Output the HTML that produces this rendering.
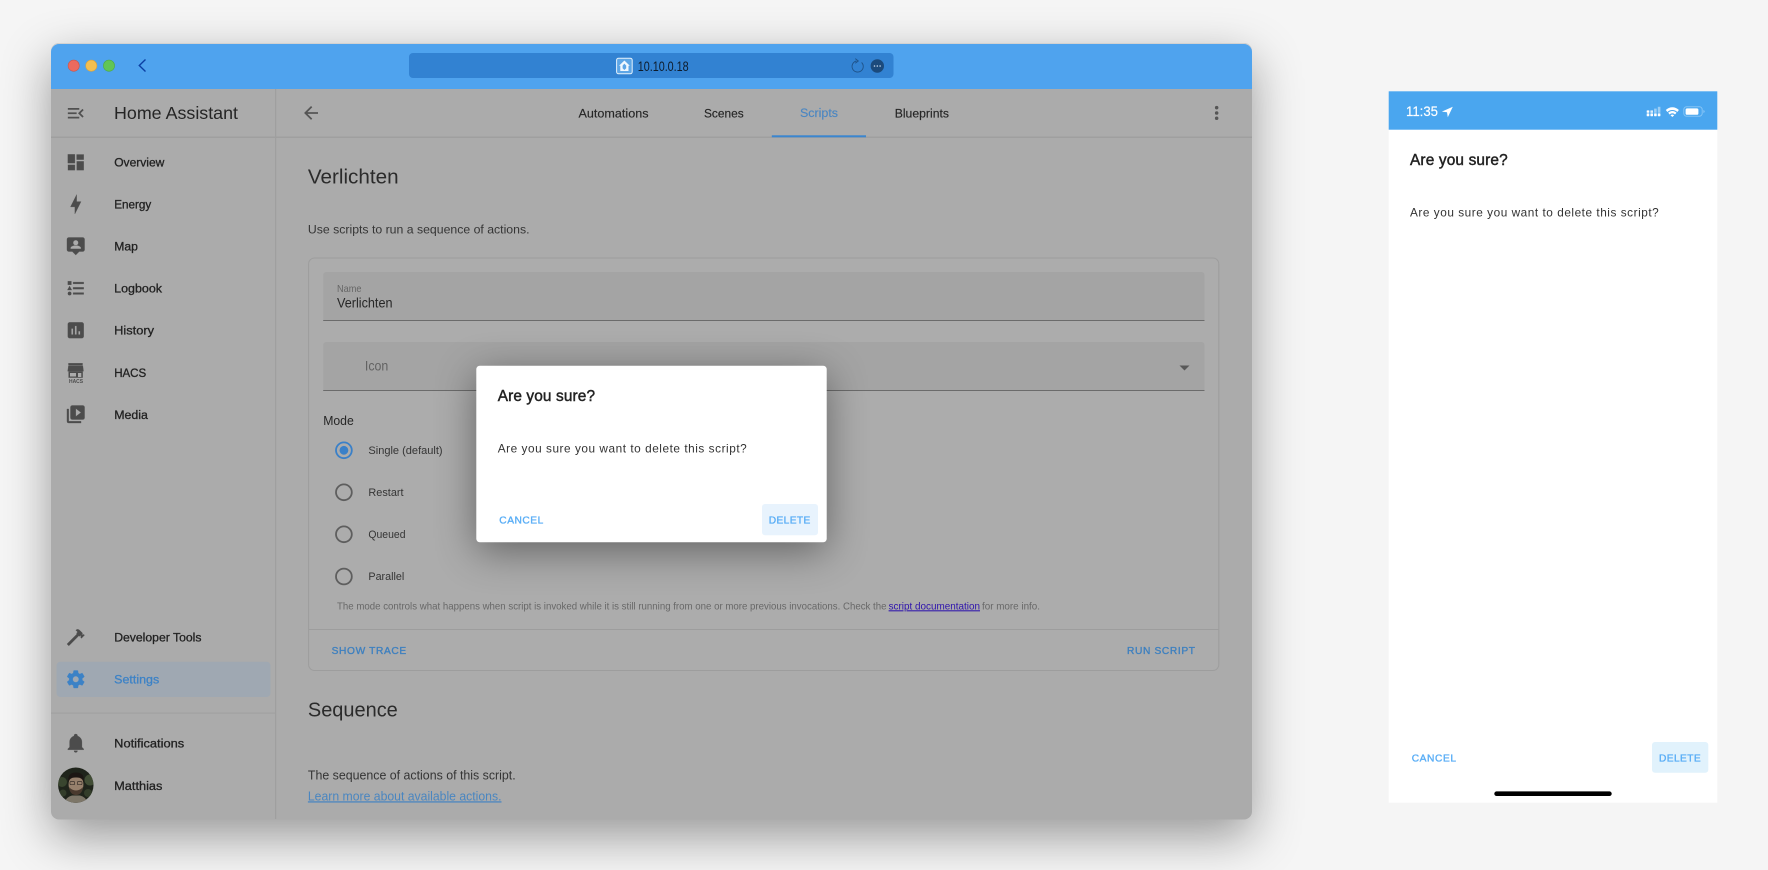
<!DOCTYPE html>
<html lang="en">
<head>
<meta charset="utf-8">
<title>Home Assistant</title>
<style>
html,body{margin:0;padding:0;width:1768px;height:870px;overflow:hidden;background:#f5f5f5}
svg{display:block;position:absolute;left:0;top:0;filter:blur(.35px)}
text{font-family:"Liberation Sans",sans-serif;font-size:12.4px;white-space:pre}
.n{fill:#222;stroke:#222;stroke-width:.3px}
.s{fill:#353535}
.h{fill:#2b2b2b;font-size:20.6px}
.b{font-size:10.2px;stroke-width:.35px}
.i{fill:#5a5a5a}
.g{fill:#686868;font-size:10.3px}
</style>
</head>
<body>
<svg width="1768" height="870" viewBox="0 0 1768 870" xmlns="http://www.w3.org/2000/svg">
<!-- browser window -->
<rect x="51" y="43" width="1201" height="776.5" rx="8" fill="#ababab" style="filter:drop-shadow(0 17px 24px rgba(0,0,0,.38))"/>
<path d="M51 89V51a8 8 0 0 1 8-8H1244a8 8 0 0 1 8 8V89Z" fill="#d2d2d2"/>
<path d="M51 89V52a8 8 0 0 1 8-8H1244a8 8 0 0 1 8 8V89Z" fill="#4fa3ee"/>
<circle cx="73.7" cy="65.7" r="5.6" fill="#ec6a5e" stroke="#c9564b" stroke-width=".6"/>
<circle cx="91.3" cy="65.7" r="5.6" fill="#f4bf4f" stroke="#d6a23f" stroke-width=".6"/>
<circle cx="109" cy="65.7" r="5.6" fill="#61c554" stroke="#4fa944" stroke-width=".6"/>
<path d="M145.5 59.5L139.3 65.5L145.5 71.5" fill="none" stroke="#0b3fa3" stroke-width="1.4"/>
<rect x="409" y="53" width="484.5" height="25" rx="4" fill="#3282d2"/>
<rect x="616.6" y="58.2" width="15.6" height="15.6" rx="2" fill="#5ea6e6" stroke="#e6f2fc" stroke-width="1"/>
<path d="M624.4 60.5L629.8 65.8H628.5V71H620.3V65.8H619Z" fill="#f2f8fe"/>
<path d="M624.4 63.6L626.2 65.6V68.2L624.4 70L622.6 68.2V65.6Z" fill="#5ea6e6"/>
<text x="637.7" y="71" style="font-size:13.4px;fill:#0e1b2a" textLength="51" lengthAdjust="spacingAndGlyphs">10.10.0.18</text>
<path d="M861.6 62.5A5.6 5.6 0 1 1 856.5 61" fill="none" stroke="#1f5288" stroke-width=".9"/>
<path d="M855.3 58.6L858.3 61L855.3 63.2" fill="none" stroke="#1f5288" stroke-width=".9"/>
<circle cx="877.3" cy="66" r="6.7" fill="#1b4a7c"/>
<circle cx="874.5" cy="66" r=".8" fill="#c4d6ea"/><circle cx="877.3" cy="66" r=".8" fill="#c4d6ea"/><circle cx="880.1" cy="66" r=".8" fill="#c4d6ea"/>

<!-- shell lines -->
<rect x="51" y="136.6" width="1201" height="1.2" fill="#9c9c9c"/>
<rect x="275" y="89" width="1.2" height="730" fill="#9f9f9f"/>
<rect x="51" y="712.5" width="224" height="1.2" fill="#a1a1a1"/>

<!-- sidebar head -->
<g fill="#505050"><path transform="translate(65.2 102.7) scale(.88)" d="M21,15.61L19.59,17L14.58,12L19.59,7L21,8.39L17.44,12L21,15.61M3,6H16V8H3V6M3,13V11H13V13H3M3,18V16H16V18H3Z"/></g>
<text x="114" y="118.8" style="font-size:17.6px;fill:#252525" textLength="124" lengthAdjust="spacingAndGlyphs">Home Assistant</text>

<!-- sidebar icons -->
<g fill="#4c4c4c" stroke="#4c4c4c" stroke-width=".3">
<path transform="translate(65.2 151.7) scale(.88)" d="M13,3V9H21V3M13,21H21V11H13M3,21H11V15H3M3,13H11V3H3V13Z"/>
<path transform="translate(65.2 193.7) scale(.88)" d="M11 15H6L13 1V9H18L11 23V15Z"/>
<path transform="translate(65.2 235.7) scale(.88)" d="M20 2H4C2.9 2 2 2.9 2 4V16C2 17.1 2.9 18 4 18H8L12 22L16 18H20C21.1 18 22 17.1 22 16V4C22 2.9 21.1 2 20 2M12 5C13.7 5 15 6.3 15 8S13.7 11 12 11 9 9.7 9 8 10.3 5 12 5M18 15H6V14C6 12 10 10.9 12 10.9S18 12 18 14V15Z"/>
<path transform="translate(65.2 277.7) scale(.88)" d="M5,9.5L7.5,14H2.5L5,9.5M3,4H7V8H3V4M5,20A2,2 0 0,0 7,18A2,2 0 0,0 5,16A2,2 0 0,0 3,18A2,2 0 0,0 5,20M9,5V7H21V5H9M9,19H21V17H9V19M9,13H21V11H9V13Z"/>
<path transform="translate(65.2 319.7) scale(.88)" d="M19 3H5C3.9 3 3 3.9 3 5V19C3 20.1 3.9 21 5 21H19C20.1 21 21 20.1 21 19V5C21 3.9 20.1 3 19 3M9 17H7V10H9V17M13 17H11V7H13V17M17 17H15V13H17V17Z"/>
<rect x="68.5" y="363.3" width="14" height="1.8"/>
<path d="M68.5 365.8H82.8L83.5 371.2H67.7Z"/>
<path d="M68.5 371.5H82.8V377.8H68.5ZM70 373V376.5H76V373ZM78 373V377H81.3V373Z" fill-rule="evenodd" stroke="none"/>
<path transform="translate(65.2 403.7) scale(.88)" d="M4,6H2V20A2,2 0 0,0 4,22H18V20H4V6M20,2H8A2,2 0 0,0 6,4V16A2,2 0 0,0 8,18H20A2,2 0 0,0 22,16V4A2,2 0 0,0 20,2M12,14.5V5.5L18,10L12,14.5Z"/>
<path transform="translate(65.2 626.7) scale(.88)" d="M2 19.63L13.43 8.2L12.72 7.5L14.14 6.07L12 3.89C13.2 2.7 15.09 2.7 16.27 3.89L19.87 7.5L18.45 8.91H21.29L22 9.62L18.45 13.21L17.74 12.5V9.62L16.27 11.04L15.56 10.33L4.13 21.76L2 19.63Z"/>
<path transform="translate(65.2 732.2) scale(.88)" d="M21,19V20H3V19L5,17V11C5,7.9 7.03,5.17 10,4.29C10,4.19 10,4.1 10,4A2,2 0 0,1 12,2A2,2 0 0,1 14,4C14,4.1 14,4.19 14,4.29C16.97,5.17 19,7.9 19,11V17L21,19M14,21A2,2 0 0,1 12,23A2,2 0 0,1 10,21"/>
</g>
<text x="69" y="382.9" textLength="14" lengthAdjust="spacingAndGlyphs" style="font-size:5px;font-weight:700;fill:#4c4c4c">HACS</text>
<rect x="56.5" y="661.7" width="214" height="35.3" rx="4" fill="#9fa8b2"/>
<path transform="translate(65.2 668.7) scale(.88)" fill="#3c82c6" stroke="#3c82c6" stroke-width=".3" d="M12,15.5A3.5,3.5 0 0,1 8.5,12A3.5,3.5 0 0,1 12,8.5A3.5,3.5 0 0,1 15.5,12A3.5,3.5 0 0,1 12,15.5M19.43,12.97C19.47,12.65 19.5,12.33 19.5,12C19.5,11.67 19.47,11.34 19.43,11L21.54,9.37C21.73,9.22 21.78,8.95 21.66,8.73L19.66,5.27C19.54,5.05 19.27,4.96 19.05,5.05L16.56,6.05C16.04,5.66 15.5,5.32 14.87,5.07L14.5,2.42C14.46,2.18 14.25,2 14,2H10C9.75,2 9.54,2.18 9.5,2.42L9.13,5.07C8.5,5.32 7.96,5.66 7.44,6.05L4.95,5.05C4.73,4.96 4.46,5.05 4.34,5.27L2.34,8.73C2.21,8.95 2.27,9.22 2.46,9.37L4.57,11C4.53,11.34 4.5,11.67 4.5,12C4.5,12.33 4.53,12.65 4.57,12.97L2.46,14.63C2.27,14.78 2.21,15.05 2.34,15.27L4.34,18.73C4.46,18.95 4.73,19.03 4.95,18.95L7.44,17.94C7.96,18.34 8.5,18.68 9.13,18.93L9.5,21.58C9.54,21.82 9.75,22 10,22H14C14.25,22 14.46,21.82 14.5,21.58L14.87,18.93C15.5,18.67 16.04,18.34 16.56,17.94L19.05,18.95C19.27,19.03 19.54,18.95 19.66,18.73L21.66,15.27C21.78,15.05 21.73,14.78 21.54,14.63L19.43,12.97Z"/>

<!-- avatar -->
<clipPath id="av"><circle cx="75.8" cy="785.2" r="17.7"/></clipPath>
<g clip-path="url(#av)">
<rect x="58" y="767" width="36" height="36" fill="#1f241b"/>
<circle cx="62" cy="782" r="5" fill="#39452f"/><circle cx="90" cy="780" r="5.5" fill="#414d35"/><circle cx="88" cy="793" r="4" fill="#333d2a"/><circle cx="63" cy="793" r="3.5" fill="#333d2a"/>
<path d="M64 803Q66 797 72 795.5H80Q86 797 88 803Z" fill="#7d7668"/>
<ellipse cx="76" cy="784.5" rx="7.4" ry="10.2" fill="#97806c"/>
<path d="M68.4 782Q67 772.5 76 772.5Q85 772.5 83.6 782Q82 777 76 777.5Q70 777 68.4 782Z" fill="#1c1613"/>
<path d="M69 787Q70 795 76 795Q82 795 83 787Q80 790.5 76 790.5Q72 790.5 69 787Z" fill="#4a3a2e"/>
<rect x="70" y="781.5" width="4.6" height="3.2" rx="1" fill="none" stroke="#3a302a" stroke-width=".7"/>
<rect x="77.4" y="781.5" width="4.6" height="3.2" rx="1" fill="none" stroke="#3a302a" stroke-width=".7"/>
</g>

<!-- sidebar labels -->
<text class="n" x="114.2" y="166.7" textLength="50.2" lengthAdjust="spacingAndGlyphs">Overview</text>
<text class="n" x="114.2" y="208.7" textLength="37" lengthAdjust="spacingAndGlyphs">Energy</text>
<text class="n" x="114.2" y="250.7" textLength="23.7" lengthAdjust="spacingAndGlyphs">Map</text>
<text class="n" x="114.2" y="292.7" textLength="47.8" lengthAdjust="spacingAndGlyphs">Logbook</text>
<text class="n" x="114.2" y="334.7" textLength="39.8" lengthAdjust="spacingAndGlyphs">History</text>
<text class="n" x="114.2" y="377" textLength="32" lengthAdjust="spacingAndGlyphs">HACS</text>
<text class="n" x="114.2" y="419" textLength="33.7" lengthAdjust="spacingAndGlyphs">Media</text>
<text class="n" x="114.2" y="641.7" textLength="87.3" lengthAdjust="spacingAndGlyphs">Developer Tools</text>
<text x="114.2" y="683.7" textLength="45" lengthAdjust="spacingAndGlyphs" style="fill:#3c82c6;stroke:#3c82c6;stroke-width:.3px">Settings</text>
<text class="n" x="114.2" y="747.7" textLength="70" lengthAdjust="spacingAndGlyphs">Notifications</text>
<text class="n" x="114.2" y="790" textLength="48.2" lengthAdjust="spacingAndGlyphs">Matthias</text>

<!-- top bar -->
<path transform="translate(300.4 102.4) scale(.88)" fill="#555" d="M20,11V13H8L13.5,18.5L12.08,19.92L4.16,12L12.08,4.08L13.5,5.5L8,11H20Z"/>
<text x="578.5" y="117.3" textLength="70" lengthAdjust="spacingAndGlyphs" style="fill:#262626;stroke:#262626;stroke-width:.15px">Automations</text>
<text x="704" y="117.3" textLength="39.7" lengthAdjust="spacingAndGlyphs" style="fill:#262626;stroke:#262626;stroke-width:.15px">Scenes</text>
<text x="800" y="116.8" textLength="38" lengthAdjust="spacingAndGlyphs" style="fill:#4a86c2;stroke:#4a86c2;stroke-width:.15px">Scripts</text>
<text x="894.7" y="117.3" textLength="54.3" lengthAdjust="spacingAndGlyphs" style="fill:#262626;stroke:#262626;stroke-width:.15px">Blueprints</text>
<rect x="771.8" y="135.3" width="94.2" height="2" fill="#3a86cf"/>
<path transform="translate(1206.1 102.4) scale(.88)" fill="#555" d="M12,16A2,2 0 0,1 14,18A2,2 0 0,1 12,20A2,2 0 0,1 10,18A2,2 0 0,1 12,16M12,10A2,2 0 0,1 14,12A2,2 0 0,1 12,14A2,2 0 0,1 10,12A2,2 0 0,1 12,10M12,4A2,2 0 0,1 14,6A2,2 0 0,1 12,8A2,2 0 0,1 10,6A2,2 0 0,1 12,4Z"/>

<!-- main content -->
<text class="h" x="307.9" y="183.3" textLength="90.7" lengthAdjust="spacingAndGlyphs">Verlichten</text>
<text class="s" x="307.9" y="233.3" textLength="221.6" lengthAdjust="spacingAndGlyphs">Use scripts to run a sequence of actions.</text>

<rect x="308.6" y="258" width="910.2" height="412.5" rx="6" fill="#acacac" stroke="#9d9d9d" stroke-width="1"/>
<path d="M323.2 320.7V275a3 3 0 0 1 3-3H1201.5a3 3 0 0 1 3 3V320.7Z" fill="#a4a4a4"/>
<rect x="323.2" y="320" width="881.3" height="1" fill="#6b6b6b"/>
<text x="337" y="292" textLength="24.5" lengthAdjust="spacingAndGlyphs" style="font-size:10.5px;fill:#666">Name</text>
<text x="337" y="307.3" textLength="55.5" lengthAdjust="spacingAndGlyphs" style="font-size:14px;fill:#262626">Verlichten</text>

<path d="M323.2 390.7V345a3 3 0 0 1 3-3H1201.5a3 3 0 0 1 3 3V390.7Z" fill="#a4a4a4"/>
<rect x="323.2" y="390" width="881.3" height="1" fill="#6b6b6b"/>
<text x="364.9" y="370.7" textLength="23.4" lengthAdjust="spacingAndGlyphs" style="font-size:13.5px;fill:#626262">Icon</text>
<path d="M1179.5 365.5H1189.5L1184.5 370.5Z" fill="#585858"/>

<text x="323.2" y="425" textLength="30.6" lengthAdjust="spacingAndGlyphs" style="font-size:12.6px;fill:#262626">Mode</text>

<circle cx="343.9" cy="450.3" r="7.9" fill="none" stroke="#3a80c8" stroke-width="1.8"/>
<circle cx="343.9" cy="450.3" r="4.4" fill="#3a80c8"/>
<circle cx="343.9" cy="492.3" r="7.9" fill="none" stroke="#5e5e5e" stroke-width="1.8"/>
<circle cx="343.9" cy="534.3" r="7.9" fill="none" stroke="#5e5e5e" stroke-width="1.8"/>
<circle cx="343.9" cy="576.5" r="7.9" fill="none" stroke="#5e5e5e" stroke-width="1.8"/>
<text class="s" style="font-size:11.2px" x="368.4" y="454" textLength="74.2" lengthAdjust="spacingAndGlyphs">Single (default)</text>
<text class="s" style="font-size:11.2px" x="368.4" y="496" textLength="35.2" lengthAdjust="spacingAndGlyphs">Restart</text>
<text class="s" style="font-size:11.2px" x="368.4" y="538" textLength="37.1" lengthAdjust="spacingAndGlyphs">Queued</text>
<text class="s" style="font-size:11.2px" x="368.4" y="580" textLength="35.9" lengthAdjust="spacingAndGlyphs">Parallel</text>

<text class="g" x="337" y="609.3" textLength="549.5" lengthAdjust="spacingAndGlyphs">The mode controls what happens when script is invoked while it is still running from one or more previous invocations. Check the</text>
<text x="888.6" y="609.3" textLength="91.4" lengthAdjust="spacingAndGlyphs" text-decoration="underline" style="font-size:10.3px;fill:#2d12ac">script documentation</text>
<text class="g" x="982" y="609.3" textLength="58" lengthAdjust="spacingAndGlyphs">for more info.</text>

<rect x="309" y="629" width="909.5" height="1" fill="#9d9d9d"/>
<text class="b" x="331.6" y="654" textLength="74.6" lengthAdjust="spacing" style="fill:#3f80bf;stroke:#3f80bf">SHOW TRACE</text>
<text class="b" x="1127" y="654" textLength="68" lengthAdjust="spacing" style="fill:#3f80bf;stroke:#3f80bf">RUN SCRIPT</text>

<text class="h" x="307.9" y="716.7" textLength="89.9" lengthAdjust="spacingAndGlyphs">Sequence</text>
<text class="s" x="307.9" y="779.3" textLength="207.8" lengthAdjust="spacingAndGlyphs" style="font-size:12.7px">The sequence of actions of this script.</text>
<text x="307.9" y="800.3" textLength="193.6" lengthAdjust="spacingAndGlyphs" text-decoration="underline" style="font-size:12.7px;fill:#4a86c0">Learn more about available actions.</text>

<!-- dialog -->
<rect x="476.3" y="365.7" width="350.4" height="176.6" rx="3.5" fill="#fff" style="filter:drop-shadow(0 9px 20px rgba(0,0,0,.42))"/>
<text x="497.7" y="401" textLength="97.3" lengthAdjust="spacing" style="font-size:15.4px;fill:#222;stroke:#222;stroke-width:.45px">Are you sure?</text>
<text x="497.7" y="452.3" textLength="249" lengthAdjust="spacing" style="font-size:11.8px;fill:#333">Are you sure you want to delete this script?</text>
<text class="b" x="499.3" y="523.7" textLength="44" lengthAdjust="spacing" style="fill:#5aaef6;stroke:#5aaef6">CANCEL</text>
<rect x="762" y="504" width="56" height="31.3" rx="3" fill="#e8f3fd"/>
<text class="b" x="768.7" y="523.7" textLength="41.6" lengthAdjust="spacing" style="fill:#5aaef6;stroke:#5aaef6">DELETE</text>

<!-- phone -->
<rect x="1388.7" y="91.3" width="328.6" height="711.4" fill="#fff"/>
<rect x="1388.7" y="91.3" width="328.6" height="38.4" fill="#4aa6ef"/>
<text x="1406" y="116" textLength="32" lengthAdjust="spacingAndGlyphs" style="font-size:14px;fill:#fff;stroke:#fff;stroke-width:.15px">11:35</text>
<path d="M1452.8 106.8L1441.8 111.6L1447 112.2L1447.8 117.2Z" fill="#fff"/>
<g fill="#fff">
<rect x="1646.7" y="113.4" width="2.6" height="2.8" rx=".5"/>
<rect x="1650.4" y="113.4" width="2.6" height="2.8" rx=".5"/>
<rect x="1654.1" y="113.4" width="2.6" height="2.8" rx=".5"/>
<rect x="1657.8" y="113.4" width="2.6" height="2.8" rx=".5"/>
<rect x="1650.4" y="110.4" width="2.6" height="2.4" opacity=".8"/>
<rect x="1654.1" y="108.6" width="2.6" height="4.2" opacity=".45"/>
<rect x="1657.8" y="106.8" width="2.6" height="6" opacity=".45"/>
<rect x="1646.7" y="110.4" width="2.6" height="2.4" rx=".5"/>
<path d="M1665.8 110A9.2 9.2 0 0 1 1678.9 110L1677.3 112A7 7 0 0 0 1667.4 112Z"/>
<path d="M1668.2 112.8A5.6 5.6 0 0 1 1676.5 112.8L1675 114.5A3.5 3.5 0 0 0 1669.7 114.5Z"/>
<path d="M1670.5 115.3A2.6 2.6 0 0 1 1674.2 115.3L1672.35 117Z"/>
<rect x="1685.6" y="108.4" width="12.8" height="6.4" rx="1.6"/>
</g>
<rect x="1683.8" y="106.8" width="18.4" height="9.4" rx="2.8" fill="none" stroke="#83c4f6" stroke-width="1"/>
<path d="M1703.3 110V113Q1704.8 112.4 1704.8 111.5T1703.3 110Z" fill="#83c4f6"/>

<text x="1410" y="165" textLength="97.7" lengthAdjust="spacing" style="font-size:15.4px;fill:#222;stroke:#222;stroke-width:.45px">Are you sure?</text>
<text x="1410" y="216.7" textLength="248.7" lengthAdjust="spacing" style="font-size:11.8px;fill:#333">Are you sure you want to delete this script?</text>
<text class="b" x="1411.7" y="761.7" textLength="44.3" lengthAdjust="spacing" style="fill:#5aaef6;stroke:#5aaef6">CANCEL</text>
<rect x="1652" y="742" width="56.3" height="30.7" rx="3" fill="#e1f2fc"/>
<text class="b" x="1659" y="761.7" textLength="41.7" lengthAdjust="spacing" style="fill:#5aaef6;stroke:#5aaef6">DELETE</text>
<rect x="1494.3" y="791.4" width="117.4" height="4.6" rx="2.3" fill="#000"/>
</svg>
</body>
</html>
